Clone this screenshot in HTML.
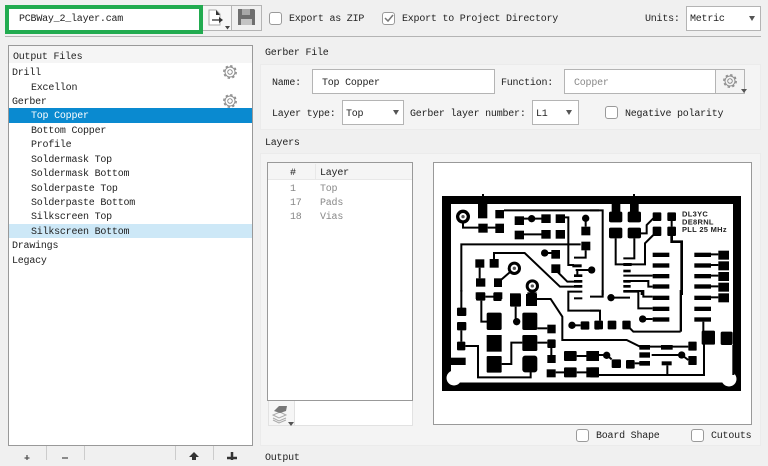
<!DOCTYPE html>
<html><head><meta charset="utf-8">
<style>
html,body{margin:0;padding:0}
body{width:768px;height:460px;overflow:hidden;background:#f0f0f0;position:relative;font-family:"Liberation Mono",monospace;font-size:10px;letter-spacing:-.22px;color:#222}
.a{position:absolute;box-sizing:border-box}
.t{position:absolute;line-height:14px;height:14px;white-space:pre;margin-top:4px}
.g{color:#888}
.box{position:absolute;box-sizing:border-box;background:#fff;border:1px solid #b4b4b4}
.cb{position:absolute;box-sizing:border-box;width:13px;height:13px;background:#fff;border:1px solid #9a9a9a;border-radius:3px}
.ar{position:absolute;width:0;height:0;border-left:3px solid transparent;border-right:3px solid transparent;border-top:5px solid #555}
.panel{position:absolute;background:#f4f4f4;border:1px solid #ebebeb;box-sizing:border-box}
svg{position:absolute;left:0;top:0}
</style></head><body>

<div class="a" style="left:5px;top:5px;width:198px;height:29px;background:#fff;border:4px solid #22ab50"></div>
<div class="t" style="left:19px;top:9px">PCBWay_2_layer.cam</div>
<div class="box" style="left:203px;top:5px;width:29px;height:26px;background:#f6f6f6;border-left:0"></div>
<div class="box" style="left:231px;top:5px;width:31px;height:26px;background:#f0f0f0"></div>
<div class="cb" style="left:269px;top:12px"></div>
<div class="t" style="left:289px;top:9px">Export as ZIP</div>
<div class="cb" style="left:382px;top:12px"></div>
<div class="t" style="left:402px;top:9px">Export to Project Directory</div>
<div class="t" style="left:645px;top:9px">Units:</div>
<div class="box" style="left:686px;top:6px;width:75px;height:25px"></div>
<div class="t" style="left:690px;top:9px">Metric</div>
<div class="ar" style="left:749px;top:16px"></div>
<div class="a" style="left:5px;top:36px;width:756px;height:1px;background:#b4b4b4"></div>

<div class="box" style="left:8px;top:45px;width:245px;height:401px;border-color:#999"></div>
<div class="a" style="left:9px;top:46px;width:243px;height:17px;background:#f5f5f5"></div>
<div class="a" style="left:9px;top:108px;width:243px;height:15px;background:#0a8ad0"></div>
<div class="a" style="left:9px;top:224px;width:243px;height:14px;background:#cde8f7"></div>
<div class="t" style="left:13px;top:47px">Output Files</div>
<div class="t" style="left:12px;top:63px">Drill</div>
<div class="t" style="left:31px;top:78px">Excellon</div>
<div class="t" style="left:12px;top:92px">Gerber</div>
<div class="t" style="left:31px;top:106px;color:#fff">Top Copper</div>
<div class="t" style="left:31px;top:121px">Bottom Copper</div>
<div class="t" style="left:31px;top:135px">Profile</div>
<div class="t" style="left:31px;top:150px">Soldermask Top</div>
<div class="t" style="left:31px;top:164px">Soldermask Bottom</div>
<div class="t" style="left:31px;top:179px">Solderpaste Top</div>
<div class="t" style="left:31px;top:193px">Solderpaste Bottom</div>
<div class="t" style="left:31px;top:207px">Silkscreen Top</div>
<div class="t" style="left:31px;top:222px">Silkscreen Bottom</div>
<div class="t" style="left:12px;top:236px">Drawings</div>
<div class="t" style="left:12px;top:251px">Legacy</div>

<div class="a" style="left:46px;top:446px;width:1px;height:14px;background:#ccc"></div>
<div class="a" style="left:84px;top:446px;width:1px;height:14px;background:#ccc"></div>
<div class="a" style="left:175px;top:446px;width:1px;height:14px;background:#ccc"></div>
<div class="a" style="left:213px;top:446px;width:1px;height:14px;background:#ccc"></div>

<div class="t" style="left:265px;top:43px">Gerber File</div>
<div class="panel" style="left:260px;top:64px;width:501px;height:66px"></div>
<div class="t" style="left:272px;top:73px">Name:</div>
<div class="box" style="left:312px;top:69px;width:183px;height:25px"></div>
<div class="t" style="left:322px;top:73px">Top Copper</div>
<div class="t" style="left:501px;top:73px">Function:</div>
<div class="box" style="left:564px;top:69px;width:152px;height:25px"></div>
<div class="t g" style="left:574px;top:73px">Copper</div>
<div class="box" style="left:715px;top:69px;width:30px;height:25px;background:#f4f4f4"></div>
<div class="t" style="left:272px;top:104px">Layer type:</div>
<div class="box" style="left:342px;top:100px;width:62px;height:25px"></div>
<div class="t" style="left:346px;top:104px">Top</div>
<div class="ar" style="left:393px;top:110px"></div>
<div class="t" style="left:410px;top:104px">Gerber layer number:</div>
<div class="box" style="left:532px;top:100px;width:47px;height:25px"></div>
<div class="t" style="left:536px;top:104px">L1</div>
<div class="ar" style="left:566px;top:110px"></div>
<div class="cb" style="left:605px;top:106px"></div>
<div class="t" style="left:625px;top:104px">Negative polarity</div>

<div class="t" style="left:265px;top:133px">Layers</div>
<div class="panel" style="left:260px;top:153px;width:501px;height:293px"></div>
<div class="box" style="left:267px;top:162px;width:146px;height:239px;border-color:#999"></div>
<div class="a" style="left:268px;top:163px;width:144px;height:17px;background:#f5f5f5;border-bottom:1px solid #e8e8e8"></div>
<div class="a" style="left:315px;top:164px;width:1px;height:15px;background:#e8e8e8"></div>
<div class="t" style="left:290px;top:163px">#</div>
<div class="t" style="left:320px;top:163px">Layer</div>
<div class="t g" style="left:290px;top:179px">1</div><div class="t g" style="left:320px;top:179px">Top</div>
<div class="t g" style="left:290px;top:193px">17</div><div class="t g" style="left:320px;top:193px">Pads</div>
<div class="t g" style="left:290px;top:207px">18</div><div class="t g" style="left:320px;top:207px">Vias</div>
<div class="a" style="left:268px;top:401px;width:145px;height:25px;background:#fff;border:1px solid #e2e2e2;border-top:0"></div>
<div class="a" style="left:268px;top:401px;width:27px;height:25px;background:#f6f6f6;border:1px solid #e2e2e2;border-top:0"></div>

<div class="box" style="left:433px;top:162px;width:319px;height:263px;border-color:#999"></div>
<div class="cb" style="left:576px;top:429px"></div>
<div class="t" style="left:596px;top:426px">Board Shape</div>
<div class="cb" style="left:691px;top:429px"></div>
<div class="t" style="left:711px;top:426px">Cutouts</div>
<div class="t" style="left:265px;top:448px">Output</div>

<svg width="768" height="460" viewBox="0 0 768 460">
<defs>
<g id="gear" fill="none" stroke="#8a8a8a">
<circle cx="0" cy="0" r="2.3" stroke-width=".9"/>
<circle cx="0" cy="0" r="5" stroke-width=".9"/>
<circle cx="0" cy="0" r="6.2" stroke-width="1.4" stroke-dasharray="2.4 2.47"/>
</g>
</defs>
<use href="#gear" x="230" y="72"/>
<use href="#gear" x="230" y="101"/>
<use href="#gear" x="730" y="81"/>
<path d="M741 89h6l-3 4z" fill="#555"/>

<path d="M209 10h7l4 4v11h-11z" fill="#fff" stroke="#aaa"/>
<path d="M216 10l4 5h-4z" fill="#333"/>
<path d="M212 20h8" stroke="#333" stroke-width="1.3"/><path d="M219 17l4 3-4 3z" fill="#333"/>
<path d="M225 26h5l-2.500 3.500z" fill="#444"/>
<path d="M238 9h16l1 1v15h-17z" fill="#6f6f6f"/>
<rect x="242" y="9" width="8" height="6" fill="#a8a8a8"/>
<rect x="241" y="19" width="11" height="6" fill="#c4c4c4"/>
<path d="M385 18l3 3 5-6" fill="none" stroke="#777" stroke-width="1.5"/>
<path d="M273 415l6 3 7-3-6-3z M273 418l6 3 7-3" fill="none" stroke="#aaa"/>
<path d="M274 411l5-5h8l-1 5-6 2z" fill="#777"/>
<path d="M273 420l6 3 7-3" fill="none" stroke="#aaa"/>
<path d="M288 422h6l-3 4z" fill="#555"/>
<path d="M27 455v5M24.500 458h5" stroke="#555" stroke-width="1.300"/>
<path d="M62 458h6" stroke="#555" stroke-width="1.300"/>
<path d="M189 457l5-5 5 5h-3v3h-4v-3z" fill="#333"/>
<path d="M232 452v8M227 458h10" stroke="#333" stroke-width="2.500"/>

<rect x="442" y="196" width="299" height="195" fill="#000"/>
<rect x="451" y="204" width="282" height="178.500" fill="#fff"/>
<circle cx="454" cy="378" r="7.500" fill="#fff"/>
<circle cx="729" cy="379" r="7.500" fill="#fff"/>
<rect x="482" y="194" width="2" height="3" fill="#000"/>
<rect x="633" y="194" width="2" height="3" fill="#000"/>

<g transform="translate(434 185) scale(.33333)" fill="#000" stroke="none">
<rect x="132" y="55" width="28" height="45"/>
<rect x="184" y="75" width="26" height="25"/>
<rect x="133" y="116" width="28" height="27"/>
<rect x="184" y="116" width="26" height="28"/>
<rect x="242" y="94" width="28" height="26"/>
<circle cx="293" cy="101" r="11"/>
<rect x="322" y="88" width="28" height="26"/>
<rect x="365" y="88" width="28" height="26"/>
<rect x="242" y="137" width="28" height="26"/>
<rect x="322" y="135" width="28" height="26"/>
<rect x="365" y="135" width="28" height="26"/>
<circle cx="455" cy="100" r="11"/>
<rect x="442" y="125" width="27" height="26"/>
<rect x="442" y="170" width="27" height="26"/>
<circle cx="332" cy="204" r="11"/>
<rect x="352" y="195" width="26" height="26"/>
<rect x="124" y="223" width="27" height="25"/>
<rect x="126" y="280" width="28" height="25"/>
<rect x="167" y="222" width="27" height="26"/>
<rect x="180" y="280" width="24" height="26"/>
<rect x="352" y="238" width="27" height="26"/>
<rect x="415" y="238" width="28" height="9"/>
<circle cx="473" cy="255" r="11"/>
<rect x="420" y="268" width="25" height="8"/>
<rect x="420" y="285" width="25" height="8"/>
<rect x="420" y="300" width="25" height="8"/>
<rect x="125" y="322" width="28" height="20"/>
<rect x="180" y="322" width="25" height="20"/>
<rect x="228" y="325" width="32" height="8"/>
<rect x="280" y="322" width="28" height="20"/>
<g fill="none" stroke="#000" stroke-width="6">
<path d="M210 76H495"/>
<path d="M87 95V128H135M161 128H185"/>
<path d="M270 101H325"/>
<path d="M393 97H403V240H420"/>
<path d="M270 148H325"/>
<path d="M455 100V125M455 196V218H420"/>
<path d="M82 320V178H440"/>
<path d="M332 204H355"/>
<path d="M137 248V280"/>
<path d="M180 222V204H272L378 305H440"/>
<path d="M241 250L195 290"/>
<path d="M365 255L400 290H440"/>
<path d="M295 303V325"/>
<path d="M425 255H473M430 255V270"/>
</g>
<circle cx="87" cy="95" r="21"/><circle cx="87" cy="95" r="11" fill="#fff"/><circle cx="87" cy="95" r="5" fill="#555"/>
<circle cx="241" cy="250" r="20"/><circle cx="241" cy="250" r="11" fill="#fff"/><circle cx="241" cy="250" r="5" fill="#555"/>
<circle cx="295" cy="303" r="20"/><circle cx="295" cy="303" r="11" fill="#fff"/><circle cx="295" cy="303" r="5" fill="#555"/>
</g>

<g transform="translate(590 185) scale(.33333)" fill="#000" stroke="none">
<rect x="65" y="57" width="26" height="25"/><rect x="57" y="80" width="40" height="32" rx="5"/>
<rect x="120" y="57" width="26" height="25"/><rect x="113" y="80" width="40" height="32" rx="5"/>
<rect x="57" y="128" width="40" height="32" rx="5"/>
<rect x="113" y="128" width="40" height="32" rx="5"/>
<rect x="188" y="82" width="26" height="26" rx="3"/>
<rect x="188" y="125" width="26" height="28" rx="3"/>
<rect x="232" y="82" width="26" height="26" rx="3"/>
<rect x="232" y="125" width="26" height="28" rx="3"/>
<rect x="188" y="203" width="50" height="13"/>
<rect x="188" y="235" width="50" height="13"/>
<rect x="188" y="267" width="50" height="13"/>
<rect x="188" y="298" width="50" height="13"/>
<rect x="100" y="234" width="25" height="9"/>
<rect x="100" y="254" width="22" height="8"/>
<rect x="100" y="285" width="22" height="8"/>
<rect x="100" y="300" width="22" height="8"/>
<rect x="313" y="203" width="50" height="13"/>
<rect x="313" y="235" width="50" height="13"/>
<rect x="313" y="267" width="50" height="13"/>
<rect x="313" y="298" width="50" height="13"/>
<rect x="385" y="197" width="32" height="27"/>
<rect x="385" y="229" width="32" height="27"/>
<rect x="385" y="261" width="32" height="27"/>
<rect x="385" y="293" width="32" height="27"/>
<g fill="none" stroke="#000" stroke-width="6">
<path d="M0 76H38V330"/>
<path d="M77 160V238H165V175L190 150"/>
<path d="M133 160V220H100"/>
<path d="M153 145H170V120L190 100"/>
<path d="M245 108V125"/>
<path d="M100 272H188"/>
<path d="M100 288H175V305H188"/>
<path d="M100 318H155V330"/>
<path d="M363 208H385M363 240H385M363 272H385M363 304H385"/>
</g>
<path d="M245 150V170H275V330" fill="none" stroke="#000" stroke-width="8"/>
</g>

<g transform="translate(434 290) scale(.33333)" fill="#000" stroke="none">
<rect x="69" y="53" width="28" height="25" rx="3"/>
<rect x="69" y="96" width="28" height="25" rx="3"/>
<rect x="69" y="155" width="25" height="26" rx="3"/>
<rect x="50" y="203" width="45" height="22"/>
<rect x="126" y="7" width="28" height="25" rx="3"/>
<rect x="178" y="7" width="25" height="26" rx="3"/>
<rect x="158" y="68" width="45" height="52" rx="5"/>
<rect x="228" y="12" width="33" height="38" rx="3"/>
<circle cx="248" cy="95" r="11"/>
<rect x="265" y="68" width="45" height="52" rx="5"/>
<rect x="340" y="104" width="25" height="26"/>
<rect x="276" y="12" width="33" height="36"/>
<rect x="158" y="135" width="45" height="50"/>
<rect x="265" y="135" width="45" height="48" rx="4"/>
<rect x="340" y="148" width="25" height="26" rx="3"/>
<rect x="340" y="195" width="25" height="24"/>
<rect x="158" y="198" width="45" height="50" rx="3"/>
<rect x="265" y="197" width="45" height="50" rx="8"/>
<rect x="338" y="238" width="27" height="24"/>
<rect x="390" y="232" width="38" height="30" rx="3"/>
<rect x="457" y="232" width="38" height="30"/>
<rect x="390" y="183" width="38" height="30" rx="3"/>
<rect x="457" y="183" width="38" height="30"/>
<circle cx="414" cy="106" r="11"/>
<rect x="440" y="94" width="26" height="25" rx="3"/>
<rect x="482" y="94" width="15" height="25" rx="3"/>
<g fill="none" stroke="#000" stroke-width="6">
<path d="M82 0V55M82 121V155"/>
<path d="M94 168H132V262H290V245"/>
<path d="M154 20H180"/>
<path d="M142 32V95H160"/>
<path d="M245 50V95"/>
<path d="M310 115H340"/>
<path d="M309 27H350L385 80V150H495"/>
<path d="M310 158H340"/>
<path d="M352 174V195"/>
<path d="M265 158H232V222H203"/>
<path d="M365 247H390M428 247H460"/>
<path d="M428 198H460"/>
<path d="M414 106H440"/>
<path d="M445 5H403V62H495"/>
<path d="M420 25H445"/>
</g>
</g>

<g transform="translate(590 290) scale(.33333)" fill="#000" stroke="none">
<circle cx="63" cy="23" r="11"/>
<rect x="188" y="50" width="50" height="13"/>
<rect x="188" y="17" width="50" height="13"/>
<circle cx="158" cy="87" r="11"/>
<rect x="188" y="82" width="50" height="13"/>
<rect x="313" y="17" width="50" height="13"/>
<rect x="385" y="10" width="32" height="27"/>
<rect x="313" y="50" width="50" height="13"/>
<rect x="313" y="82" width="50" height="13"/>
<rect x="335" y="122" width="40" height="42" rx="4"/>
<rect x="392" y="125" width="36" height="40" rx="5"/>
<rect x="97" y="92" width="25" height="26" rx="3"/>
<rect x="53" y="92" width="26" height="26" rx="3"/>
<rect x="13" y="92" width="26" height="26" rx="3"/>
<rect x="295" y="155" width="25" height="27" rx="2"/>
<rect x="213" y="165" width="35" height="14"/>
<rect x="148" y="165" width="32" height="14"/>
<rect x="148" y="187" width="32" height="16"/>
<rect x="148" y="213" width="32" height="14"/>
<rect x="108" y="210" width="26" height="26" rx="3"/>
<rect x="65" y="208" width="28" height="26" rx="3"/>
<circle cx="50" cy="196" r="11"/>
<rect x="0" y="183" width="25" height="30" rx="2"/>
<circle cx="275" cy="195" r="11"/>
<rect x="295" y="198" width="25" height="27" rx="2"/>
<rect x="215" y="214" width="30" height="12"/>
<rect x="0" y="232" width="25" height="30" rx="2"/>
<g fill="none" stroke="#000" stroke-width="6">
<path d="M38 0V20H0"/>
<path d="M63 23H120"/>
<path d="M100 5H145V55H188"/>
<path d="M160 0V20H188"/>
<path d="M158 87H188"/>
<path d="M363 22H385"/>
<path d="M0 62H30V92"/>
<path d="M110 105L130 125H272"/>
<path d="M0 150H110L150 170H295"/>
<path d="M134 220H150"/>
<path d="M65 208L50 195H0"/>
<path d="M185 195H275L295 210"/>
<path d="M232 226V255"/>
<path d="M0 255H342V130"/>
</g>
<rect x="269" y="0" width="7" height="125"/>
<rect x="337" y="95" width="6" height="30"/>
<rect x="427" y="165" width="6" height="90"/>
</g>

<text x="682" y="216.500" font-family="Liberation Sans" font-size="7.500" font-weight="bold" letter-spacing=".3" fill="#222">DL3YC</text>
<text x="682" y="224.500" font-family="Liberation Sans" font-size="7.500" font-weight="bold" letter-spacing=".3" fill="#222">DE8RNL</text>
<text x="682" y="232" font-family="Liberation Sans" font-size="7.500" font-weight="bold" letter-spacing=".3" fill="#222">PLL 25 MHz</text>
</svg>
</body></html>
